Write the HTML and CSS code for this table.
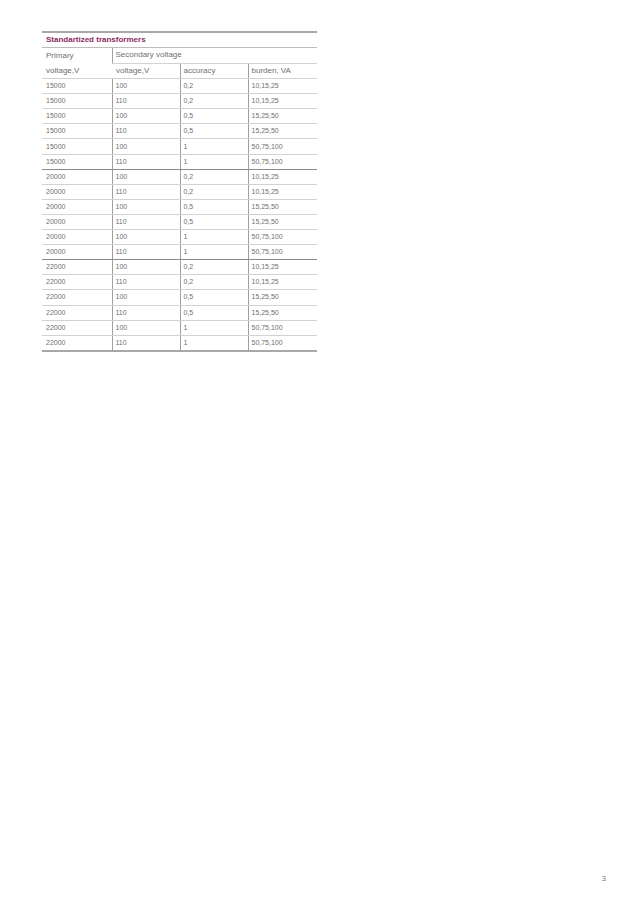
FILE: index.html
```html
<!DOCTYPE html>
<html>
<head>
<meta charset="utf-8">
<link rel="stylesheet" href="styles.css">
</head>
<body>
<div class="page">
  <table class="tbl">
    <colgroup><col class="c1"><col class="c2"><col class="c3"><col class="c4"></colgroup>
    <tr class="title"><td colspan="4">Standartized transformers</td></tr>
    <tr class="h1"><td rowspan="2" class="prim"><div>Primary</div><div class="pv">voltage,V</div></td><td colspan="3">Secondary voltage</td></tr>
    <tr class="h2"><td>voltage,V</td><td>accuracy</td><td>burden, VA</td></tr>
    <tr><td>15000</td><td>100</td><td>0,2</td><td>10,15,25</td></tr>
    <tr><td>15000</td><td>110</td><td>0,2</td><td>10,15,25</td></tr>
    <tr><td>15000</td><td>100</td><td>0,5</td><td>15,25,50</td></tr>
    <tr><td>15000</td><td>110</td><td>0,5</td><td>15,25,50</td></tr>
    <tr><td>15000</td><td>100</td><td>1</td><td>50,75,100</td></tr>
    <tr class="grp"><td>15000</td><td>110</td><td>1</td><td>50,75,100</td></tr>
    <tr><td>20000</td><td>100</td><td>0,2</td><td>10,15,25</td></tr>
    <tr><td>20000</td><td>110</td><td>0,2</td><td>10,15,25</td></tr>
    <tr><td>20000</td><td>100</td><td>0,5</td><td>15,25,50</td></tr>
    <tr><td>20000</td><td>110</td><td>0,5</td><td>15,25,50</td></tr>
    <tr><td>20000</td><td>100</td><td>1</td><td>50,75,100</td></tr>
    <tr class="grp"><td>20000</td><td>110</td><td>1</td><td>50,75,100</td></tr>
    <tr><td>22000</td><td>100</td><td>0,2</td><td>10,15,25</td></tr>
    <tr><td>22000</td><td>110</td><td>0,2</td><td>10,15,25</td></tr>
    <tr><td>22000</td><td>100</td><td>0,5</td><td>15,25,50</td></tr>
    <tr><td>22000</td><td>110</td><td>0,5</td><td>15,25,50</td></tr>
    <tr><td>22000</td><td>100</td><td>1</td><td>50,75,100</td></tr>
    <tr class="last"><td>22000</td><td>110</td><td>1</td><td>50,75,100</td></tr>
  </table>
  <div class="footer">3</div>
</div>
</body>
</html>
```

FILE: styles.css
```css
html, body {
  margin: 0;
  padding: 0;
  background: #ffffff;
}
.page {
  width: 638px;
  height: 902px;
  box-sizing: border-box;
  padding: 31px 0 0 42px;
  display: flex;
  flex-direction: column;
  font-family: "Liberation Sans", Arial, sans-serif;
  color: #707070;
}
.tbl {
  border-collapse: collapse;
  table-layout: fixed;
  width: 275px;
  font-size: 7px;
  border-top: 2px solid #a8a8a8;
}
.c1 { width: 70px; }
.c2 { width: 68px; }
.c3 { width: 68px; }
.c4 { width: 69px; }
.tbl td {
  height: 14.1px;
  padding: 0 0 0 3px;
  border-bottom: 1px solid #d2d2d2;
  border-left: 1px solid #a0a0a0;
  line-height: 8px;
  vertical-align: middle;
  white-space: nowrap;
}
.tbl td:first-child {
  border-left: none;
  padding-left: 4px;
}
.title td {
  font-size: 8px;
  font-weight: bold;
  color: #8b2a5e;
  border-bottom: 1px solid #bdbdbd;
  border-left: none;
  padding-left: 4px;
}
.h1 td, .h2 td { font-size: 8px; }
.prim {
  vertical-align: top !important;
}
.prim div { height: 14.5px; line-height: 14.5px; }
.prim div:first-child { margin-top: 1px; }
.grp td { border-bottom: 1px solid #8a8a8a; }
.last td { border-bottom: 2px solid #a8a8a8; }
.footer {
  margin-top: auto;
  align-self: flex-end;
  margin-right: 32px;
  margin-bottom: 19px;
  font-size: 8px;
  color: #777;
}
```
